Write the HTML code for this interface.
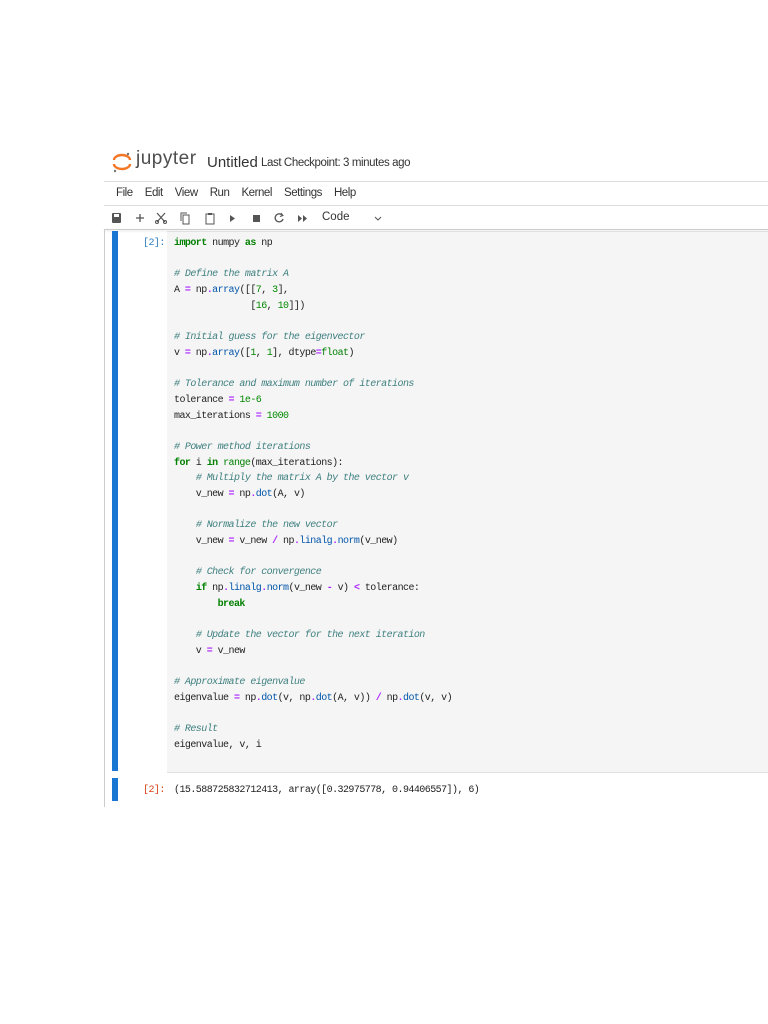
<!DOCTYPE html>
<html><head><meta charset="utf-8"><style>
body{margin:0;width:768px;height:1024px;background:#fff;position:relative;overflow:hidden;font-family:"Liberation Sans",sans-serif}
.a{position:absolute}
.hl{position:absolute;left:104px;width:664px;height:1px;background:#ddd}
.menu span{margin-right:12px}
pre{margin:0;font-family:"Liberation Mono",monospace;font-size:10px;letter-spacing:-0.55px;line-height:15.69px;color:#222}
.k{color:#008000;font-weight:bold}.c{color:#408080;font-style:italic}.n{color:#008800}.o{color:#aa22ff;font-weight:bold}.p{color:#0055aa}.b{color:#008000}
</style></head><body>
<svg class="a" style="left:112px;top:151px" width="20" height="22" viewBox="0 0 20 22"><path d="M2 9 A8 5 0 0 1 18 9" stroke="#f37726" stroke-width="2.4" fill="none"/><path d="M2 13 A8 5 0 0 0 18 13" stroke="#f37726" stroke-width="2.4" fill="none"/><circle cx="16" cy="3" r="1.2" fill="#767677"/><circle cx="3" cy="20" r="1.2" fill="#767677"/></svg>
<div class="a" style="left:136px;top:148px;font-size:19px;color:#4e4e4e;letter-spacing:0.5px">jupyter</div>
<div class="a" style="left:207px;top:154px;font-size:15px;color:#333">Untitled</div>
<div class="a" style="left:261px;top:157px;font-size:11.5px;color:#333;letter-spacing:-0.4px">Last Checkpoint: 3 minutes ago</div>
<div class="hl" style="top:181px"></div>
<div class="a menu" style="left:116px;top:187px;font-size:11.5px;color:#333;letter-spacing:-0.45px"><span>File</span><span>Edit</span><span>View</span><span>Run</span><span>Kernel</span><span>Settings</span><span>Help</span></div>
<div class="hl" style="top:205px"></div>
<svg class="a" style="left:110px;top:210px" width="280" height="16" viewBox="0 0 280 16" fill="#555" stroke="#555">
<rect x="2" y="3" width="9" height="10" rx="1" stroke="none"/><rect x="4" y="4" width="5" height="3" fill="#fff" stroke="none"/>
<path d="M26 8h8M30 4v8" stroke-width="1.3"/>
<path d="M47 3l8 9M55 3l-8 9" stroke-width="1.2" fill="none"/><circle cx="47" cy="12" r="1.5" fill="none"/><circle cx="55" cy="12" r="1.5" fill="none"/>
<rect x="73" y="5" width="6" height="9" fill="none"/><path d="M71 11V3h6" fill="none"/>
<rect x="96" y="4" width="8" height="10" fill="none"/><rect x="98" y="3" width="4" height="2" stroke="none"/>
<path d="M120 5l5 3.5-5 3.5z" stroke="none"/>
<rect x="143" y="5" width="7" height="7" stroke="none"/>
<path d="M172 5a4 4 0 1 0 1 4" fill="none" stroke-width="1.3"/><path d="M171 3l2 2.5-3 1" fill="none"/>
<path d="M188 5l4 3.5-4 3.5zM193 5l4 3.5-4 3.5z" stroke="none"/>
<path d="M265 7l3 3 3-3" fill="none" stroke-width="1"/></svg>
<div class="a" style="left:322px;top:211px;font-size:11.5px;color:#333">Code</div>
<div class="hl" style="top:229px;background:#ccc;box-shadow:0 1px 2px #ddd"></div>
<div class="a" style="left:104px;top:230px;width:1px;height:577px;background:#ccc"></div>
<div class="a" style="left:112px;top:231px;width:6px;height:540px;background:#1976d2"></div>
<div class="a" style="left:112px;top:778px;width:6px;height:23px;background:#1976d2"></div>
<div class="a" style="left:167px;top:231px;width:601px;height:540px;background:#f5f5f5;border-top:1px solid #e0e0e0;border-bottom:1px solid #e0e0e0"></div>
<pre class="a" style="left:143px;top:236px;color:#307fc1">[2]:</pre>
<pre class="a" style="left:174px;top:236px"><span class="k">import</span> numpy <span class="k">as</span> np

<span class="c"># Define the matrix A</span>
A <span class="o">=</span> np<span class="o">.</span><span class="p">array</span>([[<span class="n">7</span>, <span class="n">3</span>],
              [<span class="n">16</span>, <span class="n">10</span>]])

<span class="c"># Initial guess for the eigenvector</span>
v <span class="o">=</span> np<span class="o">.</span><span class="p">array</span>([<span class="n">1</span>, <span class="n">1</span>], dtype<span class="o">=</span><span class="b">float</span>)

<span class="c"># Tolerance and maximum number of iterations</span>
tolerance <span class="o">=</span> <span class="n">1e-6</span>
max_iterations <span class="o">=</span> <span class="n">1000</span>

<span class="c"># Power method iterations</span>
<span class="k">for</span> i <span class="k">in</span> <span class="b">range</span>(max_iterations):
    <span class="c"># Multiply the matrix A by the vector v</span>
    v_new <span class="o">=</span> np<span class="o">.</span><span class="p">dot</span>(A, v)

    <span class="c"># Normalize the new vector</span>
    v_new <span class="o">=</span> v_new <span class="o">/</span> np<span class="o">.</span><span class="p">linalg</span><span class="o">.</span><span class="p">norm</span>(v_new)

    <span class="c"># Check for convergence</span>
    <span class="k">if</span> np<span class="o">.</span><span class="p">linalg</span><span class="o">.</span><span class="p">norm</span>(v_new <span class="o">-</span> v) <span class="o">&lt;</span> tolerance:
        <span class="k">break</span>

    <span class="c"># Update the vector for the next iteration</span>
    v <span class="o">=</span> v_new

<span class="c"># Approximate eigenvalue</span>
eigenvalue <span class="o">=</span> np<span class="o">.</span><span class="p">dot</span>(v, np<span class="o">.</span><span class="p">dot</span>(A, v)) <span class="o">/</span> np<span class="o">.</span><span class="p">dot</span>(v, v)

<span class="c"># Result</span>
eigenvalue, v, i</pre>
<pre class="a" style="left:143px;top:783px;color:#d84315">[2]:</pre>
<pre class="a" style="left:174px;top:783px">(15.588725832712413, array([0.32975778, 0.94406557]), 6)</pre>
</body></html>
